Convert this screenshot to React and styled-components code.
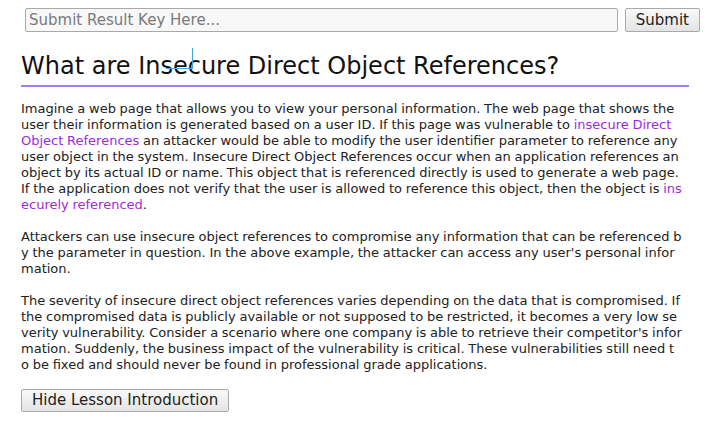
import React from "react";
import styled, { createGlobalStyle } from "styled-components";

const Global = createGlobalStyle`
  html, body { margin: 0; padding: 0; background: #fff; }
  body { font-family: "DejaVu Sans", sans-serif; }
`;

const Page = styled.div`
  width: 668px;
  padding: 8px 22px 0 21px;
  display: flex;
  flex-direction: column;
`;

const KeyForm = styled.form`
  display: flex;
  align-items: center;
  gap: 7px;
  margin: 0 -11px 0 4px;
`;

const KeyInput = styled.input`
  flex: 1;
  height: 24px;
  box-sizing: border-box;
  border: 1px solid #a9a9a9;
  border-radius: 2px;
  background: #f8f8f8;
  font-family: "DejaVu Sans", sans-serif;
  font-size: 15px;
  padding: 0 3px;
  color: #222;
  &::placeholder { color: #7a7a7a; }
`;

const Button = styled.button`
  height: ${(p) => (p.$tall ? 23 : 24)}px;
  box-sizing: border-box;
  border: 1px solid #a9a9a9;
  border-radius: 2px;
  background: linear-gradient(#f9f9f9, #e4e4e4);
  font-family: "DejaVu Sans", sans-serif;
  font-size: 15px;
  color: #222;
  padding: 0 10px;
  align-self: flex-start;
  line-height: 1;
`;

const Heading = styled.h1`
  margin: 19px 0 0;
  font-family: "DejaVu Sans", sans-serif;
  font-weight: normal;
  font-size: 24px;
  line-height: 30px;
  color: #111;
  padding-bottom: 4px;
  border-bottom: 2px solid #a57de8;
  position: relative;
`;

const Body = styled.div`
  margin-top: 14px;
  margin-right: 7px;
  font-size: 13px;
  line-height: 16px;
  color: #222;
  word-break: break-all;
  word-spacing: -0.4px;
`;

const Para = styled.p`
  margin: 0 0 16px;
`;

const Link = styled.a`
  color: #a12ad6;
  text-decoration: none;
`;

const Cursor = styled.span`
  position: absolute;
  left: 145px;
  top: -3px;
  width: 26px;
  height: 20px;
  border-right: 1px solid #4ba3de;
  border-bottom: 1px solid #4ba3de;
  pointer-events: none;
`;

export default function App() {
  return (
    <>
      <Global />
      <Page>
        <KeyForm onSubmit={(e) => e.preventDefault()}>
          <KeyInput placeholder="Submit Result Key Here..." />
          <Button type="submit">Submit</Button>
        </KeyForm>
        <Heading>
          What are Insecure Direct Object References?
          <Cursor />
        </Heading>
        <Body>
          <Para>
            Imagine a web page that allows you to view your personal information. The web page that shows the user their information is generated based on a user ID. If this page was vulnerable to{" "}
            <Link href="#">insecure Direct Object References</Link> an attacker would be able to modify the user identifier parameter to reference any user object in the system. Insecure Direct Object References occur when an application references an object by its actual ID or name. This object that is referenced directly is used to generate a web page. If the application does not verify that the user is allowed to reference this object, then the object is{" "}
            <Link href="#">insecurely referenced</Link>.
          </Para>
          <Para>
            Attackers can use insecure object references to compromise any information that can be referenced by the parameter in question. In the above example, the attacker can access any user's personal information.
          </Para>
          <Para>
            The severity of insecure direct object references varies depending on the data that is compromised. If the compromised data is publicly available or not supposed to be restricted, it becomes a very low severity vulnerability. Consider a scenario where one company is able to retrieve their competitor's information. Suddenly, the business impact of the vulnerability is critical. These vulnerabilities still need to be fixed and should never be found in professional grade applications.
          </Para>
        </Body>
        <Button $tall type="button">Hide Lesson Introduction</Button>
      </Page>
    </>
  );
}
